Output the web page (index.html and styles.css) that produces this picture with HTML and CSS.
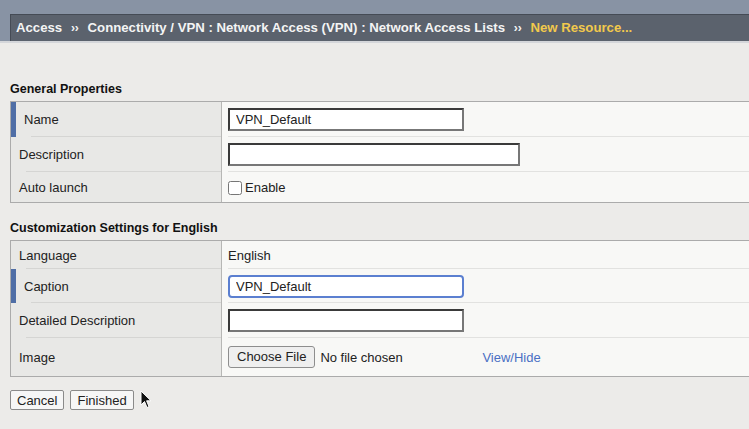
FILE: index.html
```html
<!DOCTYPE html>
<html lang="en">
<head>
    <meta charset="UTF-8">
    <title>New Resource - Network Access Lists</title>
    <link rel="stylesheet" href="styles.css">
</head>
<body>
    <div class="topbar">
        <div class="crumbs">
            <span>Access</span>
            <span class="sep">&rsaquo;&rsaquo;</span>
            <span>Connectivity / VPN : Network Access (VPN) : Network Access Lists</span>
            <span class="sep">&rsaquo;&rsaquo;</span>
            <span class="current">New Resource...</span>
        </div>
    </div>

    <div class="content">
        <h2>General Properties</h2>
        <div class="props">
            <div class="row required">
                <div class="label">Name</div>
                <div class="value"><input type="text" class="field" value="VPN_Default"></div>
            </div>
            <div class="row">
                <div class="label">Description</div>
                <div class="value"><input type="text" class="field wide"></div>
            </div>
            <div class="row short">
                <div class="label">Auto launch</div>
                <div class="value"><label class="check"><input type="checkbox"> Enable</label></div>
            </div>
        </div>

        <h2>Customization Settings for English</h2>
        <div class="props">
            <div class="row lang">
                <div class="label">Language</div>
                <div class="value">English</div>
            </div>
            <div class="row required caption">
                <div class="label">Caption</div>
                <div class="value"><input type="text" class="field focused" value="VPN_Default"></div>
            </div>
            <div class="row">
                <div class="label">Detailed Description</div>
                <div class="value"><input type="text" class="field"></div>
            </div>
            <div class="row tall">
                <div class="label">Image</div>
                <div class="value">
                    <span class="file-btn">Choose File</span>
                    <span class="file-name">No file chosen</span>
                    <a class="toggle" href="#">View/Hide</a>
                </div>
            </div>
        </div>

        <div class="actions">
            <button type="button">Cancel</button>
            <button type="button">Finished</button>
            <svg class="cursor" width="12" height="19" viewBox="0 0 12 19">
                <path d="M1 1 L1 15 L4.5 11.5 L7 17.5 L9 16.6 L6.6 10.8 L11 10.8 Z" fill="#111" stroke="#fff" stroke-width="1"/>
            </svg>
        </div>
    </div>
</body>
</html>
```

FILE: styles.css
```css
/* Page */
body {
    margin: 0;
    background-color: #ecebe9;
    font-family: "Liberation Sans", Arial, sans-serif;
    font-size: 13px;
    color: #222;
}

/* Breadcrumb bar */
.topbar {
    background-color: #8893a4;
    padding-top: 14px;
    padding-left: 10px;
    border-bottom: 2px solid #d4d6da;
}

.crumbs {
    height: 26px;
    line-height: 26px;
    padding-left: 5px;
    background-color: #5b626d;
    border-top: 1px solid #454b55;
    border-left: 1px solid #454b55;
    color: #f4f4f4;
    font-weight: bold;
    font-size: 13.2px;
    white-space: nowrap;
    overflow: hidden;
}

.crumbs .sep {
    margin: 0 5px;
    font-size: 12px;
}

.crumbs .current {
    color: #f2c94c;
}

/* Sections */
.content {
    padding-left: 10px;
}

h2 {
    margin: 39px 0 5px;
    font-size: 12.5px;
    font-weight: bold;
    color: #111;
}

.props + h2 {
    margin-top: 18px;
}

.props {
    border-top: 1px solid #ababab;
    border-bottom: 1px solid #ababab;
    border-left: 1px solid #ababab;
}

.row {
    display: grid;
    grid-template-columns: 211px 1fr;
    height: 35px;
}

.row.short {
    height: 30px;
}

.row.lang {
    height: 28px;
}

.row.caption {
    height: 34px;
}

.row.tall {
    height: 38px;
}

.label {
    display: flex;
    align-items: center;
    padding-left: 8px;
    background: linear-gradient(#d5d5d3, #d5d5d3) 15px 100% / calc(100% - 15px) 1px no-repeat, #e8e8e6;
    border-right: 1px solid #b7b7b5;
}

.value {
    display: flex;
    align-items: center;
    padding-left: 6px;
    background: linear-gradient(#e2e2e0, #e2e2e0) 6px 100% / calc(100% - 6px) 1px no-repeat, #f8f8f6;
}

.row:last-child .label,
.row:last-child .value {
    background-image: none;
}

.row.required .label {
    border-left: 5px solid #4f6ea6;
}

/* Controls */
.field {
    box-sizing: border-box;
    width: 236px;
    height: 23px;
    padding: 0 6px;
    border: 2px solid #3a3a3a;
    border-right-color: #777;
    border-bottom-color: #777;
    background-color: #fff;
    font-family: inherit;
    font-size: 13px;
    color: #222;
}

.field.wide {
    width: 292px;
}

.field.focused {
    border: 2px solid #5b7fd0;
    border-radius: 4px;
    outline: none;
}

.check {
    display: flex;
    align-items: center;
    gap: 3px;
    padding-top: 1px;
}

.check input {
    margin: 0;
    width: 14px;
    height: 14px;
}

.file-btn {
    box-sizing: border-box;
    height: 22px;
    line-height: 20px;
    padding: 0 8px;
    border: 1px solid #8e8e8e;
    border-radius: 3px;
    background-color: #efefef;
}

.file-name {
    margin-left: 5px;
    width: 162px;
}

.toggle {
    color: #4a6fc4;
    text-decoration: none;
}

/* Footer buttons */
.actions {
    position: relative;
    display: flex;
    gap: 6px;
    margin-top: 13px;
}

.actions button {
    height: 20px;
    padding: 0 6px;
    border: 1px solid #8a8a8a;
    border-radius: 2px;
    background-color: #f6f6f6;
    font-family: inherit;
    font-size: 13px;
    color: #222;
}

.cursor {
    position: absolute;
    left: 130px;
    top: 0;
}
```
